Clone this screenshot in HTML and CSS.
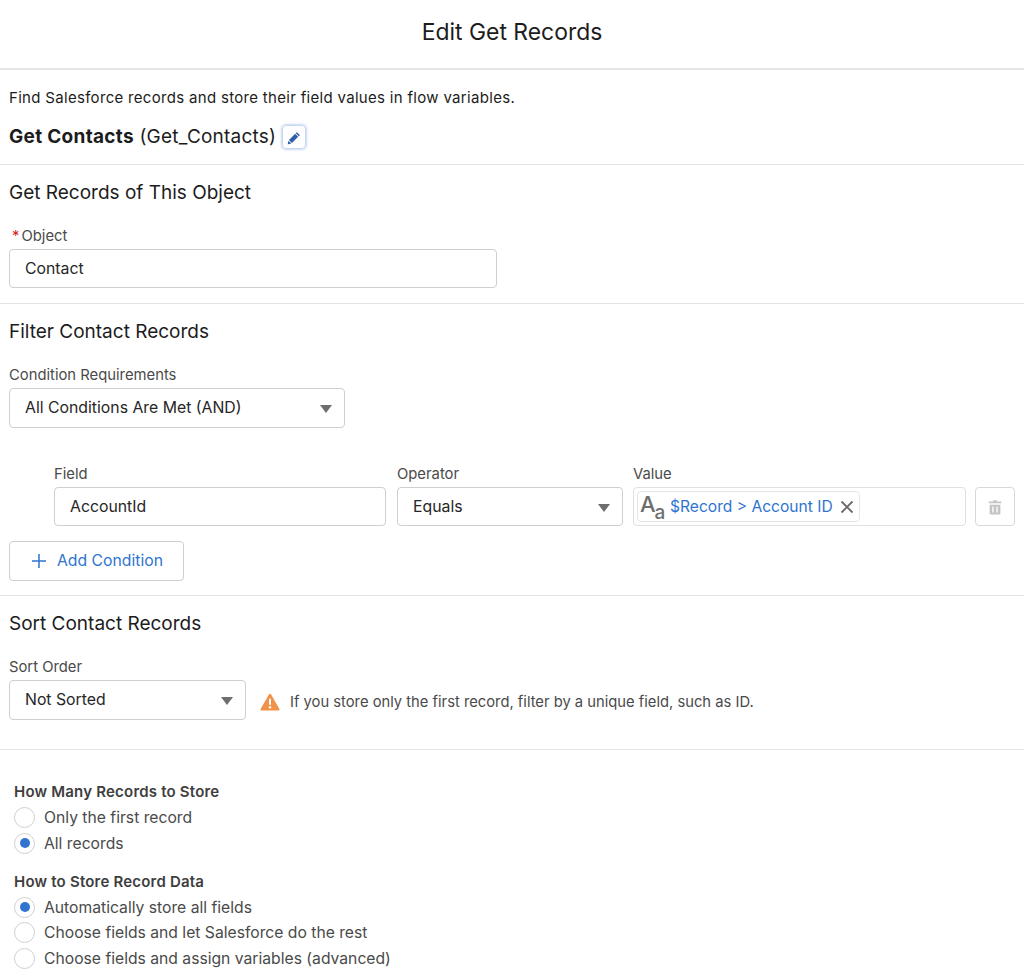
FILE: index.html
```html
<!DOCTYPE html>
<html lang="en">
<head>
<meta charset="utf-8">
<title>Edit Get Records</title>
<link rel="stylesheet" href="styles.css">
</head>
<body>
<header class="page-header"><h1>Edit Get Records</h1></header>

<section class="section intro">
  <p class="desc">Find Salesforce records and store their field values in flow variables.</p>
  <div class="name-row">
    <span class="name"><b>Get Contacts</b> (Get_Contacts)</span>
    <span class="edit-btn">
      <svg viewBox="0 0 16 16" width="15" height="15"><path d="M10.900 2.600l2.500 2.500a.5.5 0 0 1 0 .7L12.600 6.600 9.400 3.400l.8-.8a.5.5 0 0 1 .7 0zM8.700 4.100l3.200 3.200-6.600 6.600-3.200-3.200zM1.600 11.400l3 3-3.400.8a.3.3 0 0 1-.4-.4z" fill="#2f5fa8"/></svg>
    </span>
  </div>
</section>

<section class="section object">
  <h2>Get Records of This Object</h2>
  <label class="label"><span class="req">*</span>Object</label>
  <div class="input object-input">Contact</div>
</section>

<section class="section filter">
  <h2>Filter Contact Records</h2>
  <label class="label">Condition Requirements</label>
  <div class="input select cond-select">All Conditions Are Met (AND)<i class="caret"></i></div>
  <div class="cond-row">
    <div class="col col-field"><label class="label">Field</label><div class="input">AccountId</div></div>
    <div class="col col-op"><label class="label">Operator</label><div class="input select">Equals<i class="caret"></i></div></div>
    <div class="col col-value">
      <label class="label">Value</label>
      <div class="value-box">
        <span class="pill">
          <span class="aa"><span class="big">A</span><span class="small">a</span></span>
          <span class="pill-text">$Record &gt; Account ID</span>
          <svg class="x" viewBox="0 0 14 14" width="14" height="14"><path d="M1.500 1.500l11 11M12.500 1.500l-11 11" stroke="#6b6b6b" stroke-width="1.800" fill="none"/></svg>
        </span>
      </div>
    </div>
    <div class="trash-btn">
      <svg viewBox="0 0 14 14" width="16" height="16"><path d="M5.500 1h3v1.200h4v1.600h-11V2.200h4zM2.300 5h9.400v7.600a1 1 0 0 1-1 1H3.300a1 1 0 0 1-1-1zM4.600 6.600v5.200h1.200V6.600zM8.200 6.600v5.200h1.200V6.600z" fill="#c4c4c4" fill-rule="evenodd"/></svg>
    </div>
  </div>
  <div class="add-btn">
    <svg viewBox="0 0 16 16" width="16" height="16"><path d="M8 1v14M1 8h14" stroke="#2f74d0" stroke-width="1.500" fill="none"/></svg>
    <span>Add Condition</span>
  </div>
</section>

<section class="section sort">
  <h2>Sort Contact Records</h2>
  <label class="label">Sort Order</label>
  <div class="sort-row">
    <div class="input select sort-select">Not Sorted<i class="caret"></i></div>
    <svg class="warn" viewBox="0 0 20 18" width="20" height="18"><path d="M10 .8c.5 0 .9.3 1.100.7l8.300 14.400c.4.7-.1 1.500-.9 1.500H1.500c-.8 0-1.300-.8-.9-1.500L8.900 1.500c.2-.4.6-.7 1.100-.7z" fill="#f0924a"/><rect x="9" y="5.500" width="2" height="6.500" rx="1" fill="#fff"/><circle cx="10" cy="14.300" r="1.200" fill="#fff"/></svg>
    <span class="hint">If you store only the first record, filter by a unique field, such as ID.</span>
  </div>
</section>

<section class="store">
  <h3>How Many Records to Store</h3>
  <div class="radio-group">
    <div class="radio"><i class="dot"></i>Only the first record</div>
    <div class="radio"><i class="dot on"></i>All records</div>
  </div>
  <h3 class="second">How to Store Record Data</h3>
  <div class="radio-group">
    <div class="radio"><i class="dot on"></i>Automatically store all fields</div>
    <div class="radio"><i class="dot"></i>Choose fields and let Salesforce do the rest</div>
    <div class="radio"><i class="dot"></i>Choose fields and assign variables (advanced)</div>
  </div>
</section>
</body>
</html>
```
FILE: styles.css
```css
* { box-sizing: border-box; }
html, body { margin: 0; padding: 0; }
body {
  width: 1024px;
  height: 972px;
  overflow: hidden;
  background: #fff;
  color: #1c1c1c;
  font-family: Inter, "Liberation Sans", sans-serif;
  font-size: 15px;
}
.page-header {
  height: 70px;
  border-bottom: 2px solid #e6e6e6;
  display: flex;
  align-items: center;
  justify-content: center;
  padding-bottom: 5px;
}
h1 { margin: 0; font-size: 22.900px; font-weight: 400; }
.section { border-bottom: 1px solid #e4e4e4; padding: 0 9px; }
.intro { height: 95px; padding-top: 19px; }
.desc { margin: 0; font-size: 15px; letter-spacing: .31px; line-height: 18px; }
.name-row { display: flex; align-items: center; gap: 6px; margin-top: 17px; height: 26px; }
.name { font-size: 19px; letter-spacing: .22px; line-height: 26px; }
.name b { font-weight: 700; letter-spacing: .3px; }
.edit-btn {
  width: 24px; height: 24px;
  border: 1px solid #c9d7ee;
  border-radius: 4px;
  box-shadow: 0 0 3px #8fb0e6;
  display: flex; align-items: center; justify-content: center;
}
h2 { margin: 0; font-size: 19px; font-weight: 400; line-height: 24px; }
.object { height: 139px; padding-top: 16px; }
.label { display: block; font-size: 14.800px; line-height: 18px; color: #4a4a4a; }
.object .label { margin-top: 22px; padding-left: 3px; }
.req { color: #d8232a; margin-right: 2px; }
.input {
  position: relative;
  height: 40px;
  border: 1px solid #cfcfcf;
  border-radius: 4px;
  padding: 0 15px;
  display: flex; align-items: center;
  font-size: 15.800px;
  color: #262626;
  background: #fff;
}
.select { padding-bottom: 1px; }
.object-input { width: 488px; margin-top: 4px; height: 39px; }
.filter { height: 292px; padding-top: 16px; }
.filter > .label { margin-top: 22px; }
.cond-select { width: 336px; margin-top: 4px; }
.caret {
  position: absolute; right: 12px; top: 50%;
  margin-top: -3px;
  width: 0; height: 0;
  border-left: 6.500px solid transparent;
  border-right: 6.500px solid transparent;
  border-top: 8px solid #6e6e6e;
}
.cond-row { display: flex; align-items: flex-end; margin: 37px 0 0 45px; }
.col .label { margin-bottom: 4px; }
.col-field { width: 332px; }
.col-field .input, .col-op .input { height: 39px; }
.col-op { width: 226px; margin-left: 11px; }
.col-value { width: 333px; margin-left: 10px; }
.value-box {
  height: 39px;
  border: 1px solid #e0e0e0;
  border-radius: 4px;
  padding: 3px;
}
.pill {
  display: inline-flex; align-items: center;
  height: 31px; width: 223px;
  border: 1px solid #e6e6e6;
  border-radius: 4px;
  padding-left: 2px;
}
.aa { display: inline-flex; width: 30px; color: #6e6e6e; line-height: 1; align-items: flex-end; height: 27px; flex: none; }
.aa .big { font-size: 22px; font-weight: 500; margin-bottom: 5px; }
.aa .small { font-size: 19px; font-weight: 500; margin-bottom: -2px; margin-left: -1px; }
.pill-text { color: #2f74d0; font-size: 15.600px; white-space: nowrap; }
.x { margin-left: 7px; flex: none; }
.trash-btn {
  width: 40px; height: 39px; margin-left: 9px;
  border: 1px solid #d8d8d8; border-radius: 4px;
  display: flex; align-items: center; justify-content: center;
}
.add-btn {
  width: 175px; height: 40px; margin-top: 15px;
  border: 1px solid #cfcfcf; border-radius: 4px;
  display: flex; align-items: center;
  padding-left: 21px; padding-bottom: 1px; gap: 10px;
  color: #2f74d0; font-size: 15.750px;
}
.sort { height: 154px; padding-top: 16px; }
.sort > .label { margin-top: 22px; }
.sort-row { display: flex; align-items: center; margin-top: 4px; }
.sort-select { width: 237px; }
.warn { margin-left: 14px; margin-top: 4px; }
.hint { margin-left: 10px; margin-top: 4px; font-size: 14.750px; color: #4a4a4a; white-space: nowrap; }
.store { padding: 33px 0 0 14px; color: #4a4a4a; }
h3 { margin: 0; font-size: 15px; font-weight: 600; letter-spacing: .2px; line-height: 18px; color: #3e3e3e; }
h3.second { margin-top: 17px; }
.radio-group { margin-top: 4px; }
.radio { display: flex; align-items: center; height: 25.400px; font-size: 15.700px; gap: 9px; }
.dot {
  width: 21px; height: 21px; border-radius: 50%;
  border: 1px solid #cfcfcf; position: relative; background: #fff; flex: none;
}
.dot.on::after {
  content: ""; position: absolute; left: 4.500px; top: 4.500px;
  width: 10px; height: 10px; border-radius: 50%; background: #2f74d0;
}
```
